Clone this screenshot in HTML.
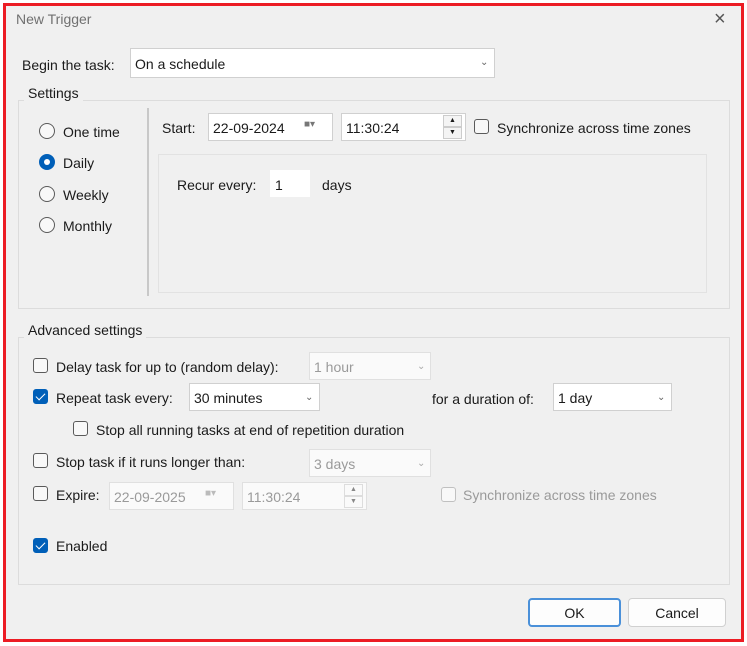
<!DOCTYPE html>
<html><head><meta charset="utf-8"><style>
*{box-sizing:border-box;margin:0;padding:0}
body{width:747px;height:646px;background:#fff;font-family:"Liberation Sans",sans-serif;font-size:14px;color:#1a1a1a;position:relative;overflow:hidden}
.dlg{position:absolute;left:3px;top:3px;width:741px;height:639px;border:3px solid #ec1c24;background:#f0f0f0}
.a{position:absolute;white-space:nowrap}
.box{position:absolute;border:1px solid #dcdcdc}
.in{position:absolute;background:#fff;border:1px solid #d0d0d0;padding-left:4px;line-height:26px}
.dis{color:#9a9a9a;background:#fafafa;border-color:#e0e0e0}
.cb{position:absolute;width:15px;height:15px;border:1px solid #5a5a5a;border-radius:3px;background:#f8f8f8}
.cb.on{background:#005fb8;border-color:#005fb8}
.cb.on:after{content:"";position:absolute;left:4px;top:1px;width:4px;height:8px;border:solid #fff;border-width:0 1.5px 1.5px 0;transform:rotate(45deg)}
.cb.d{border-color:#c0c0c0}
.rd{position:absolute;width:16px;height:16px;border:1px solid #5a5a5a;border-radius:50%;background:#f8f8f8}
.rd.on{background:#005fb8;border-color:#005fb8}
.rd.on:after{content:"";position:absolute;left:4px;top:4px;width:6px;height:6px;border-radius:50%;background:#fff}
.chev{position:absolute;font-size:10px;color:#666}
.btn{position:absolute;height:29px;border:1px solid #d0d0d0;border-radius:4px;background:#fdfdfd;text-align:center;line-height:27px}
</style></head><body>
<div class="dlg"></div>
<div class="a" style="left:16px;top:11px;color:#707070">New Trigger</div>
<div class="a" style="left:714px;top:8px;font-size:20px;color:#555">×</div>

<div class="a" style="left:22px;top:57px">Begin the task:</div>
<div class="in" style="left:130px;top:48px;width:365px;height:30px;line-height:30px">On a schedule</div>
<div class="chev" style="left:480px;top:57px">⌄</div>

<div class="box" style="left:18px;top:100px;width:712px;height:209px"></div>
<div class="a" style="left:24px;top:85px;background:#f0f0f0;padding:0 4px">Settings</div>
<div class="a" style="left:147px;top:108px;width:2px;height:188px;background:#c8c8c8"></div>
<div class="rd" style="left:39px;top:123px"></div><div class="a" style="left:63px;top:124px">One time</div>
<div class="rd on" style="left:39px;top:154px"></div><div class="a" style="left:63px;top:155px">Daily</div>
<div class="rd" style="left:39px;top:186px"></div><div class="a" style="left:63px;top:187px">Weekly</div>
<div class="rd" style="left:39px;top:217px"></div><div class="a" style="left:63px;top:218px">Monthly</div>

<div class="a" style="left:162px;top:120px">Start:</div>
<div class="in" style="left:208px;top:113px;width:125px;height:28px;line-height:28px">22-09-2024</div>
<div class="a" style="left:304px;top:119px;font-size:10px;color:#777">■▾</div>
<div class="in" style="left:341px;top:113px;width:125px;height:28px;line-height:28px">11:30:24</div>
<div class="a" style="left:443px;top:115px;width:19px;height:12px;border:1px solid #ccc;background:#f4f4f4;font-size:7px;text-align:center;line-height:10px">▲</div>
<div class="a" style="left:443px;top:127px;width:19px;height:12px;border:1px solid #ccc;background:#f4f4f4;font-size:7px;text-align:center;line-height:10px">▼</div>
<div class="cb" style="left:474px;top:119px"></div>
<div class="a" style="left:497px;top:120px">Synchronize across time zones</div>

<div class="box" style="left:158px;top:154px;width:549px;height:139px;border-color:#e2e2e2"></div>
<div class="a" style="left:177px;top:177px">Recur every:</div>
<div class="in" style="left:270px;top:170px;width:40px;height:27px;border-color:#fff;line-height:28px">1</div>
<div class="a" style="left:322px;top:177px">days</div>

<div class="box" style="left:18px;top:337px;width:712px;height:248px"></div>
<div class="a" style="left:24px;top:322px;background:#f0f0f0;padding:0 4px">Advanced settings</div>

<div class="cb" style="left:33px;top:358px"></div>
<div class="a" style="left:56px;top:359px">Delay task for up to (random delay):</div>
<div class="in dis" style="left:309px;top:352px;width:122px;height:28px;line-height:28px">1 hour</div>
<div class="chev" style="left:417px;top:361px;color:#aaa">⌄</div>

<div class="cb on" style="left:33px;top:389px"></div>
<div class="a" style="left:56px;top:390px">Repeat task every:</div>
<div class="in" style="left:189px;top:383px;width:131px;height:28px;line-height:28px">30 minutes</div>
<div class="chev" style="left:305px;top:392px">⌄</div>
<div class="a" style="left:432px;top:391px">for a duration of:</div>
<div class="in" style="left:553px;top:383px;width:119px;height:28px;line-height:28px">1 day</div>
<div class="chev" style="left:657px;top:392px">⌄</div>

<div class="cb" style="left:73px;top:421px"></div>
<div class="a" style="left:96px;top:422px">Stop all running tasks at end of repetition duration</div>

<div class="cb" style="left:33px;top:453px"></div>
<div class="a" style="left:56px;top:454px">Stop task if it runs longer than:</div>
<div class="in dis" style="left:309px;top:449px;width:122px;height:28px;line-height:28px">3 days</div>
<div class="chev" style="left:417px;top:458px;color:#aaa">⌄</div>

<div class="cb" style="left:33px;top:486px"></div>
<div class="a" style="left:56px;top:487px">Expire:</div>
<div class="in dis" style="left:109px;top:482px;width:125px;height:28px;line-height:28px">22-09-2025</div>
<div class="a" style="left:205px;top:488px;font-size:10px;color:#bbb">■▾</div>
<div class="in dis" style="left:242px;top:482px;width:125px;height:28px;line-height:28px">11:30:24</div>
<div class="a" style="left:344px;top:484px;width:19px;height:12px;border:1px solid #ddd;font-size:7px;color:#888;text-align:center;line-height:10px">▲</div>
<div class="a" style="left:344px;top:496px;width:19px;height:12px;border:1px solid #ddd;font-size:7px;color:#888;text-align:center;line-height:10px">▼</div>
<div class="cb d" style="left:441px;top:487px"></div>
<div class="a" style="left:463px;top:487px;color:#9a9a9a">Synchronize across time zones</div>

<div class="cb on" style="left:33px;top:538px"></div>
<div class="a" style="left:56px;top:538px">Enabled</div>

<div class="btn" style="left:528px;top:598px;width:93px;border:2px solid #4a90d9;line-height:26px">OK</div>
<div class="btn" style="left:628px;top:598px;width:98px;line-height:28px">Cancel</div>
</body></html>
